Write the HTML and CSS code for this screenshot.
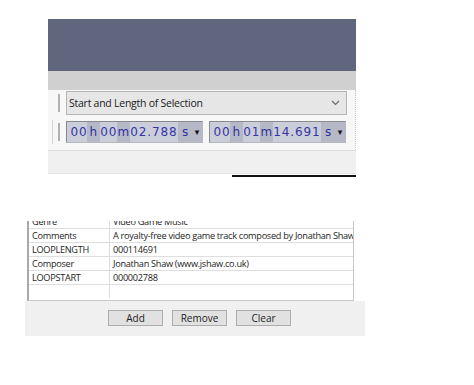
FILE: index.html
```html
<!DOCTYPE html>
<html>
<head>
<meta charset="utf-8">
<link rel="stylesheet" href="styles.css">
</head>
<body>
<div class="page">
  <section class="audio">
    <div class="titlebar"></div>
    <div class="menubar"></div>
    <div class="toolbar">
      <div class="edge"></div>
      <div class="tools">
        <div class="row">
          <span class="sep"></span>
          <div class="combo">
            <span class="combo-text">Start and Length of Selection</span>
            <svg class="chev" width="9" height="6" viewBox="0 0 9 6"><path d="M1 1 L4.5 4.5 L8 1" fill="none" stroke="#6a6a6a" stroke-width="1.2"/></svg>
          </div>
        </div>
        <div class="row">
          <span class="sep"></span>
          <div class="time">
            <span class="d">0</span><span class="d">0</span><span class="u">h</span><span class="d">0</span><span class="d">0</span><span class="u">m</span><span class="d">0</span><span class="d">2</span><span class="dot">.</span><span class="d">7</span><span class="d">8</span><span class="d">8</span><span class="u s">s</span><span class="tri">&#9662;</span>
          </div>
          <div class="time">
            <span class="d">0</span><span class="d">0</span><span class="u">h</span><span class="d">0</span><span class="d">1</span><span class="u">m</span><span class="d">1</span><span class="d">4</span><span class="dot">.</span><span class="d">6</span><span class="d">9</span><span class="d">1</span><span class="u s">s</span><span class="tri">&#9662;</span>
          </div>
        </div>
      </div>
    </div>
    <div class="status"></div>
    <div class="underline"></div>
  </section>

  <section class="tags">
    <div class="grid">
      <table>
        <tr><td class="k">Genre</td><td>Video Game Music</td></tr>
        <tr><td class="k">Comments</td><td>A royalty-free video game track composed by Jonathan Shaw</td></tr>
        <tr><td class="k">LOOPLENGTH</td><td>000114691</td></tr>
        <tr><td class="k">Composer</td><td>Jonathan Shaw (www.jshaw.co.uk)</td></tr>
        <tr><td class="k">LOOPSTART</td><td>000002788</td></tr>
        <tr class="last"><td class="k"></td><td></td></tr>
      </table>
    </div>
    <div class="buttons">
      <button class="btn">Add</button>
      <button class="btn">Remove</button>
      <button class="btn">Clear</button>
    </div>
  </section>
</div>
</body>
</html>
```

FILE: styles.css
```css
html, body {
  margin: 0;
  padding: 0;
  background: #ffffff;
}
body {
  font-family: "Open Sans", "Noto Sans", sans-serif;
  color: #1a1a1a;
}
.page {
  display: flex;
  flex-direction: column;
}
.audio {
  margin-left: 48px;
  margin-top: 19px;
  width: 308px;
  display: flex;
  flex-direction: column;
}
.titlebar {
  height: 52px;
  background: #61667f;
}
.menubar {
  height: 19px;
  background: #d0d0d0;
}
.toolbar {
  height: 60px;
  background: #f7f7f7;
  display: flex;
  border-right: 1px dotted #c8c8c8;
  box-sizing: border-box;
}
.edge {
  width: 4px;
  margin-top: 30px;
  margin-bottom: 6px;
  border-right: 1px solid #d6d6d6;
}
.tools {
  display: flex;
  flex-direction: column;
  gap: 6px;
  padding-top: 1px;
  margin-left: 5px;
}
.row {
  display: flex;
  align-items: center;
}
.sep {
  width: 2px;
  height: 18px;
  background: #b0b0b0;
  margin-right: 6px;
}
.combo {
  width: 281px;
  height: 24px;
  box-sizing: border-box;
  border: 1px solid #b4b4b4;
  background: #e6e6e6;
  display: flex;
  align-items: center;
  padding-left: 2px;
  padding-right: 6px;
}
.combo-text {
  font-size: 10.5px;
  letter-spacing: -0.25px;
  color: #222;
  flex: 1;
}
.chev {
  display: block;
}
.time {
  width: 137px;
  height: 22px;
  box-sizing: border-box;
  border: 1px solid #b8b8c0;
  border-top-color: #8a8a90;
  border-left-color: #8a8a90;
  background: #cbcdd8;
  display: flex;
  align-items: stretch;
  padding-left: 3px;
  font-family: "DejaVu Sans", sans-serif;
  font-size: 12px;
  color: #3535a8;
}
.time + .time {
  margin-left: 6px;
}
.time span {
  display: flex;
  align-items: center;
  justify-content: center;
}
.d { width: 8.5px; }
.u {
  width: 13px;
  background: #b6b8c8;
  color: #3030a0;
}
.u.s { width: 14px; margin-left: 1px; }
.dot { width: 5px; }
.tri {
  margin-left: auto;
  width: 10px;
  font-size: 9px;
  color: #111;
  background: #b6b8c8;
}
.status {
  height: 22px;
  background: #f0f0f0;
  border-top: 1px solid #dddddd;
  border-bottom: 1px solid #e4e4e4;
}
.underline {
  margin-top: 1px;
  margin-left: auto;
  width: 124px;
  height: 2px;
  background: #111;
}

.tags {
  margin-left: 25px;
  margin-top: 44px;
  width: 340px;
  display: flex;
  flex-direction: column;
}
.grid {
  margin-left: 2px;
  width: 324px;
  height: 79px;
  overflow: hidden;
  border-left: 2px solid #a8a8a8;
  border-right: 1px solid #c8c8c8;
  border-bottom: 1px solid #c8c8c8;
  box-sizing: content-box;
  background: #fff;
}
.grid table {
  margin-top: -6px;
  width: 100%;
  border-collapse: collapse;
  table-layout: fixed;
  font-size: 9.2px;
  letter-spacing: -0.3px;
}
.grid td {
  height: 13px;
  padding: 0 3px;
  border-bottom: 1px solid #dedede;
  white-space: nowrap;
  overflow: hidden;
  line-height: 13px;
  color: #1e1e1e;
}
.grid td.k {
  width: 74px;
  border-right: 1px solid #dedede;
}
.grid tr.last td {
  border-bottom: none;
}
.buttons {
  height: 35px;
  background: #f0f0f0;
  display: flex;
  gap: 9px;
  padding-left: 83px;
  padding-top: 9px;
  box-sizing: border-box;
}
.btn {
  width: 55px;
  height: 16px;
  margin: 0;
  padding: 0;
  border: 1px solid #adadad;
  background: #e1e1e1;
  font-family: "Open Sans", "Noto Sans", sans-serif;
  font-size: 10px;
  color: #1e1e1e;
}
```
